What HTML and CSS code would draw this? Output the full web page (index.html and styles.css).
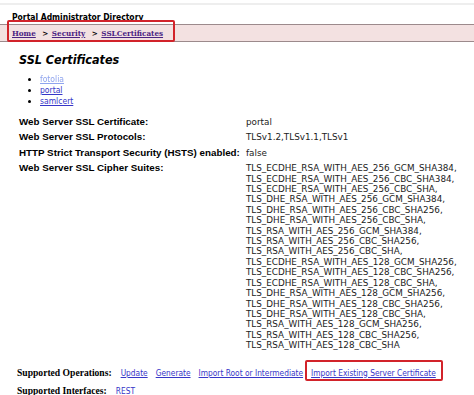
FILE: index.html
```html
<!DOCTYPE html>
<html>
<head>
    <title>Portal Administrator Directory</title>
    <link rel="stylesheet" href="styles.css">
</head>

<body>

<div class="topline"></div>
<div class="header">Portal Administrator Directory</div>
<div class="crumbs">
    <a href="#">Home</a> <span class="sep">&gt;</span> <a href="#">Security</a> <span class="sep">&gt;</span> <a href="#">SSLCertificates</a>
    <div class="mark crumb-mark"></div>
</div>

<div class="content">
    <h2 class="title">SSL Certificates</h2>
    <ul class="certs">
        <li><a href="#" class="blurred">fotolia</a></li>
        <li><a href="#">portal</a></li>
        <li><a href="#">samlcert</a></li>
    </ul>

    <div class="props">
        <div class="label">Web Server SSL Certificate:</div>
        <div class="value">portal</div>
        <div class="label">Web Server SSL Protocols:</div>
        <div class="value">TLSv1.2,TLSv1.1,TLSv1</div>
        <div class="label">HTTP Strict Transport Security (HSTS) enabled:</div>
        <div class="value">false</div>
        <div class="label">Web Server SSL Cipher Suites:</div>
        <div class="value ciphers">
            TLS_ECDHE_RSA_WITH_AES_256_GCM_SHA384,<br>
            TLS_ECDHE_RSA_WITH_AES_256_CBC_SHA384,<br>
            TLS_ECDHE_RSA_WITH_AES_256_CBC_SHA,<br>
            TLS_DHE_RSA_WITH_AES_256_GCM_SHA384,<br>
            TLS_DHE_RSA_WITH_AES_256_CBC_SHA256,<br>
            TLS_DHE_RSA_WITH_AES_256_CBC_SHA,<br>
            TLS_RSA_WITH_AES_256_GCM_SHA384,<br>
            TLS_RSA_WITH_AES_256_CBC_SHA256,<br>
            TLS_RSA_WITH_AES_256_CBC_SHA,<br>
            TLS_ECDHE_RSA_WITH_AES_128_GCM_SHA256,<br>
            TLS_ECDHE_RSA_WITH_AES_128_CBC_SHA256,<br>
            TLS_ECDHE_RSA_WITH_AES_128_CBC_SHA,<br>
            TLS_DHE_RSA_WITH_AES_128_GCM_SHA256,<br>
            TLS_DHE_RSA_WITH_AES_128_CBC_SHA256,<br>
            TLS_DHE_RSA_WITH_AES_128_CBC_SHA,<br>
            TLS_RSA_WITH_AES_128_GCM_SHA256,<br>
            TLS_RSA_WITH_AES_128_CBC_SHA256,<br>
            TLS_RSA_WITH_AES_128_CBC_SHA
        </div>
    </div>
</div>

<div class="footer">
    <div class="op-row">
        <span class="op-label">Supported Operations:</span>
        <a href="#">Update</a>
        <a href="#">Generate</a>
        <a href="#">Import Root or Intermediate</a>
        <span class="op-marked"><a href="#">Import Existing Server Certificate</a><span class="mark op-mark"></span></span>
    </div>
    <div class="op-row">
        <span class="op-label">Supported Interfaces:</span>
        <a href="#">REST</a>
    </div>
</div>

</body>
</html>
```

FILE: styles.css
```css
body {
    margin: 0;
    background: #ffffff;
    font-family: 'DejaVu Sans', Verdana, sans-serif;
    color: #000000;
    overflow: hidden;
    white-space: nowrap;
}

a {
    color: #3636c8;
}

.topline {
    height: 2px;
    margin-top: 3px;
    background: #eeeeee;
}

.header {
    padding: 5px 0 0 12px;
    height: 14px;
    font-family: 'DejaVu Sans Condensed', 'DejaVu Sans', sans-serif;
    font-size: 8.5px;
    font-weight: bold;
    line-height: 14px;
}

.crumbs {
    position: relative;
    height: 16px;
    padding-left: 12px;
    background: #f3e1e1;
    border-top: 1px solid #9c8a8c;
    border-bottom: 1px solid #9c8a8c;
    font-family: 'DejaVu Serif Condensed', 'DejaVu Serif', serif;
    font-size: 8px;
    font-weight: bold;
    line-height: 16px;
}

.crumbs a {
    color: #4a2383;
}

.crumbs .sep {
    margin: 0 1px 0 4px;
}

.mark {
    position: absolute;
    border: 2px solid #d2232a;
    border-radius: 2px;
}

.crumb-mark {
    left: 7px;
    top: -5px;
    width: 164px;
    height: 18px;
}

.content {
    padding-left: 19px;
}

.title {
    margin: 10px 0 6px 0;
    font-family: 'DejaVu Sans Condensed', 'DejaVu Sans', sans-serif;
    font-size: 12.5px;
    font-style: italic;
    font-weight: bold;
    line-height: 16px;
}

.certs {
    margin: 0;
    padding-left: 21px;
    font-family: 'DejaVu Sans Condensed', 'DejaVu Sans', sans-serif;
    font-size: 8.5px;
    line-height: 11px;
}

.certs .blurred {
    color: #8fa4ee;
    filter: blur(0.6px);
}

.props {
    display: grid;
    grid-template-columns: 227px auto;
    row-gap: 5px;
    margin-top: 10px;
    font-size: 8.8px;
    line-height: 10.4px;
}

.label {
    font-family: 'Liberation Sans', Arial, sans-serif;
    font-size: 9.8px;
    font-weight: bold;
}

.value {
    color: #222222;
}

.footer {
    padding: 13px 0 0 17px;
}

.op-row {
    display: flex;
    align-items: center;
    height: 18px;
    font-family: 'DejaVu Sans Condensed', 'DejaVu Sans', sans-serif;
    font-size: 8.3px;
}

.op-row a {
    margin-right: 8px;
}

.op-label {
    font-family: 'Liberation Serif', 'Times New Roman', serif;
    font-size: 9.6px;
    font-weight: bold;
    margin-right: 9px;
}

.op-marked {
    position: relative;
}

.op-mark {
    left: -6px;
    right: 1px;
    top: -8px;
    height: 17px;
}
```
